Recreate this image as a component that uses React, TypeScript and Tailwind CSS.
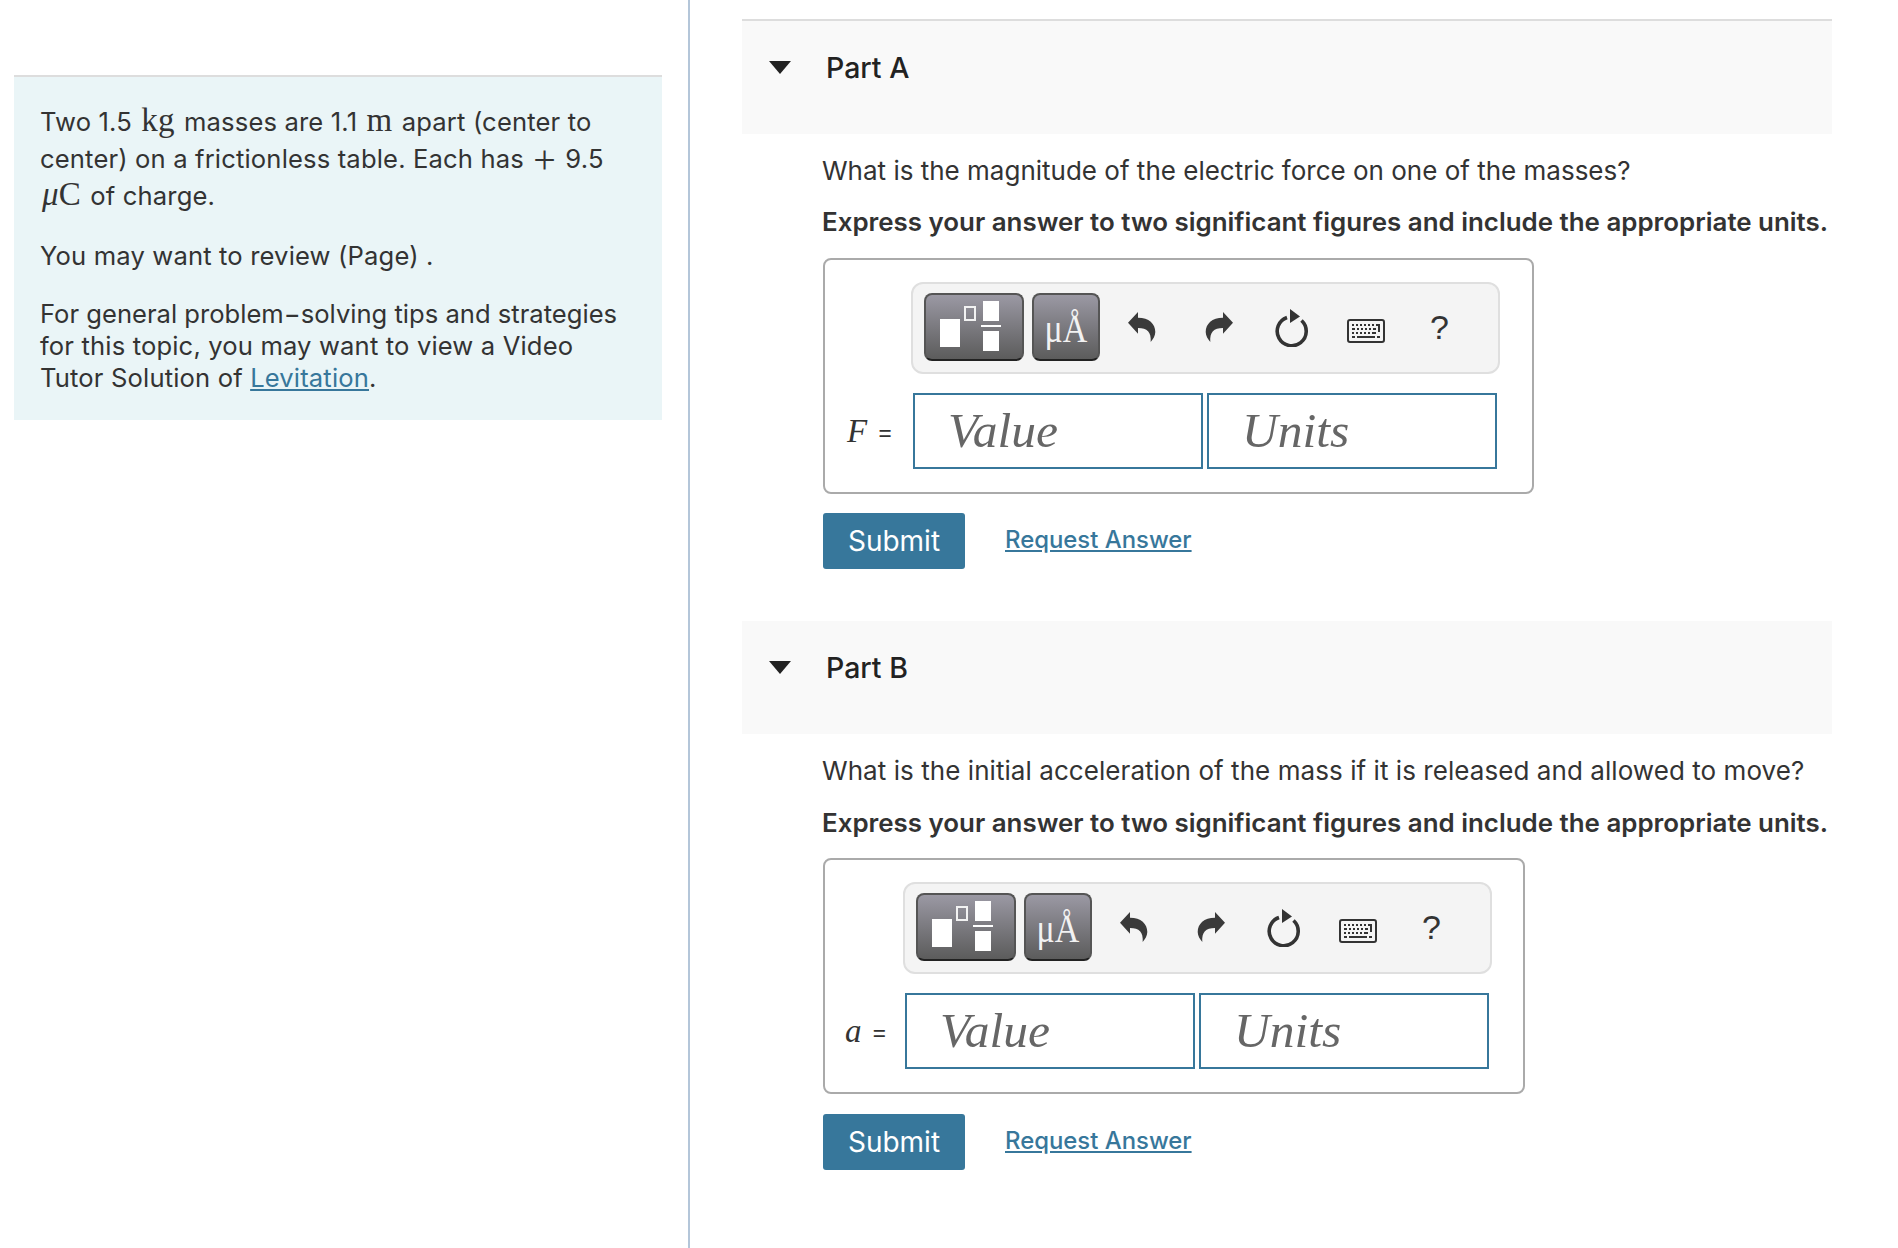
import React from "react";

const UndoIcon = ({ flip = false }: { flip?: boolean }) => (
  <svg width="28" height="30" viewBox="0 0 28 30" className={flip ? "-scale-x-100" : ""}>
    <path d="M0 10.700 L10 0 L10 5.700 C21 5.700 27.300 11.700 27.300 20 C27.300 24 25 27 22.700 30 C23.300 20 19.300 16 10 16 L10 21.700 Z" fill="#3a3a3a" />
  </svg>
);

const RefreshIcon = () => (
  <svg width="34" height="38" viewBox="0 0 34 38">
    <path d="M12 8.500 A14.500 14.500 0 1 0 26.500 11.500" fill="none" stroke="#333" strokeWidth="3.600" />
    <path d="M15 0 L25 7.500 L15 14 Z" fill="#333" />
  </svg>
);

const KeyboardIcon = () => (
  <svg width="38" height="24" viewBox="0 0 38 24">
    <rect x="1" y="1" width="36" height="22" rx="2" fill="#f4f4f4" stroke="#333" strokeWidth="2" />
    <g fill="#333">
      <rect x="5" y="5" width="2" height="2" /><rect x="9" y="5" width="2" height="2" /><rect x="13" y="5" width="2" height="2" />
      <rect x="17" y="5" width="2" height="2" /><rect x="21" y="5" width="2" height="2" /><rect x="25" y="5" width="2" height="2" />
      <rect x="29" y="5" width="4" height="2" /><rect x="31" y="7" width="2" height="6" />
      <rect x="5" y="9" width="3" height="2" /><rect x="10" y="9" width="2" height="2" /><rect x="14" y="9" width="2" height="2" />
      <rect x="18" y="9" width="2" height="2" /><rect x="22" y="9" width="2" height="2" /><rect x="26" y="9" width="3" height="2" />
      <rect x="5" y="13" width="2" height="2" /><rect x="9" y="13" width="2" height="2" /><rect x="13" y="13" width="2" height="2" />
      <rect x="17" y="13" width="2" height="2" /><rect x="21" y="13" width="2" height="2" /><rect x="25" y="13" width="4" height="2" />
      <rect x="5" y="17" width="3" height="2" /><rect x="10" y="17" width="18" height="2" /><rect x="30" y="17" width="3" height="2" />
    </g>
  </svg>
);

const TemplateIcon = () => (
  <svg width="62" height="50" viewBox="0 0 62 50">
    <rect x="0" y="18" width="20" height="28" fill="#fff" />
    <rect x="25" y="6" width="10" height="13" fill="none" stroke="#f2f2f2" strokeWidth="2" />
    <rect x="43" y="0" width="16" height="20" fill="#fff" />
    <rect x="41" y="24" width="20" height="2" fill="#fff" />
    <rect x="43" y="30" width="16" height="20" fill="#fff" />
  </svg>
);

const Toolbar = () => (
  <div className="flex h-[92px] w-[589px] items-center rounded-xl border-2 border-[#dfdfdf] bg-[#f4f4f4] pl-[11px]">
    <div className="-mt-[2px] flex h-[68px] w-[100px] items-start justify-start rounded-lg border-2 border-[#555] border-b-[#222] bg-linear-to-b from-[#9b99a4] to-[#5c5c5c] pl-[14px] pt-[6px]">
      <TemplateIcon />
    </div>
    <div className="-mt-[2px] ml-2 flex h-[68px] w-[68px] items-center justify-center rounded-lg border-2 border-[#555] border-b-[#222] bg-linear-to-b from-[#9b99a4] to-[#5c5c5c]">
      <span className="mt-1 scale-y-[1.15] font-['Liberation_Serif',serif] text-[34px] leading-none text-[#f2f2f2]">μÅ</span>
    </div>
    <div className="ml-[28px] -mt-[2px]"><UndoIcon /></div>
    <div className="ml-[49px] -mt-[2px]"><UndoIcon flip /></div>
    <div className="ml-[42px] -mt-[1px]"><RefreshIcon /></div>
    <div className="ml-[38px] mt-[5px]"><KeyboardIcon /></div>
    <span className="ml-[45px] -mt-[3px] font-['Liberation_Sans',sans-serif] text-[34px] leading-none text-[#333]">?</span>
  </div>
);

const Field = ({ placeholder }: { placeholder: string }) => (
  <div className="flex h-[76px] w-[290px] items-center border-2 border-[#37779b] bg-white pl-[33px] font-['Liberation_Serif',serif] text-[49.500px] italic leading-none text-[#666]">
    {placeholder}
  </div>
);

type PartProps = {
  name: string;
  question: string;
  questionClass: string;
  boldClass: string;
  submitClass: string;
  symbol: string;
  toolbarPad: string;
  labelWidth: string;
  labelPad: string;
  headerClass: string;
  boxWidth: string;
};

const Part = ({ name, question, questionClass, boldClass, submitClass, symbol, toolbarPad, labelWidth, labelPad, headerClass, boxWidth }: PartProps) => (
  <section>
    <div className={`flex w-[1090px] items-start bg-[#f9f9f9] ${headerClass}`}>
      <svg width="22" height="13" viewBox="0 0 22 13" className="ml-[27px] mt-[40px]">
        <path d="M0 0 H22 L11 13 Z" fill="#222" />
      </svg>
      <h2 className="ml-[35px] mt-[29px] text-[28.500px] font-medium leading-9 text-[#222]">{name}</h2>
    </div>
    <p className={`ml-[80px] mt-[21px] text-[26px] leading-8 text-[#333] ${questionClass}`}>{question}</p>
    <p className={`ml-[80px] text-[25.900px] font-semibold leading-8 text-[#333] ${boldClass}`}>
      Express your answer to two significant figures and include the appropriate units.
    </p>
    <div className={`ml-[81px] mt-[20px] h-[236px] rounded-lg border-2 border-[#aaaaaa] bg-white pt-[22px] ${boxWidth}`}>
      <div className={toolbarPad}>
        <Toolbar />
      </div>
      <div className="mt-[19px] flex items-center">
        <div className={`flex shrink-0 items-center text-[#333] ${labelWidth} ${labelPad}`}>
          <span className="font-['Liberation_Serif',serif] text-[33px] italic leading-none">{symbol}</span>
          <span className="ml-[9px] text-[27px] font-light leading-none">=</span>
        </div>
        <div className="flex gap-1">
          <Field placeholder="Value" />
          <Field placeholder="Units" />
        </div>
      </div>
    </div>
    <div className={`ml-[81px] flex h-[56px] items-center ${submitClass}`}>
      <button className="h-[56px] w-[142px] rounded-[3px] bg-[#37779b] text-[28px] text-white">Submit</button>
      <a className="ml-[40px] -mt-[2px] text-[23.900px] font-medium leading-8 text-[#37779b] underline underline-offset-2">Request Answer</a>
    </div>
  </section>
);

const Mono = ({ children, size = "text-[33px]" }: { children: React.ReactNode; size?: string }) => (
  <span className={`mx-[2px] font-['Liberation_Serif',serif] leading-[0] ${size}`}>{children}</span>
);

export default function App() {
  return (
    <div className="flex h-[1248px] w-[1898px] overflow-hidden bg-white font-['Inter',sans-serif]">
      <aside className="h-full w-[690px] shrink-0 border-r-2 border-[#b4c6d9] pl-[14px] pt-[75px]">
        <div className="h-[345px] w-[648px] border-t-2 border-[#dddddd] bg-[#eaf5f7] pl-[26px] pt-[26px] text-[25.600px] tracking-[0.15px] text-[#333]">
          <p className="leading-[37px]">
            Two 1.5 <Mono>kg</Mono> masses are 1.1 <Mono>m</Mono> apart (center to<br />
            center) on a frictionless table. Each has <Mono size="align-[-5px] text-[40px] font-light">+</Mono> 9.5<br />
            <Mono><i>μ</i>C</Mono> of charge.
          </p>
          <p className="mt-[26px] leading-8">You may want to review (Page) .</p>
          <p className="mt-[26px] leading-8">
            <span className="tracking-normal">For general problem−solving tips and strategies</span><br />
            for this topic, you may want to view a Video<br />
            Tutor Solution of <a className="text-[#37779b] underline underline-offset-2">Levitation</a>.
          </p>
        </div>
      </aside>
      <main className="pl-[52px] pt-[19px]">
        <Part
          name="Part A"
          question="What is the magnitude of the electric force on one of the masses?"
          questionClass=""
          boldClass="mt-[19px]"
          submitClass="mt-[19px]"
          symbol="F"
          toolbarPad="pl-[86px]"
          labelWidth="w-[88px]"
          labelPad="pl-[22px]"
          headerClass="h-[115px] border-t-2 border-[#dddddd]"
          boxWidth="w-[711px]"
        />
        <Part
          name="Part B"
          question="What is the initial acceleration of the mass if it is released and allowed to move?"
          questionClass="tracking-[0.06px]"
          boldClass="mt-[20px] -mb-px"
          submitClass="mt-[20px]"
          symbol="a"
          toolbarPad="pl-[78px]"
          labelWidth="w-[80px]"
          labelPad="pl-[20px]"
          headerClass="mt-[52px] h-[113px]"
          boxWidth="w-[702px]"
        />
      </main>
    </div>
  );
}
